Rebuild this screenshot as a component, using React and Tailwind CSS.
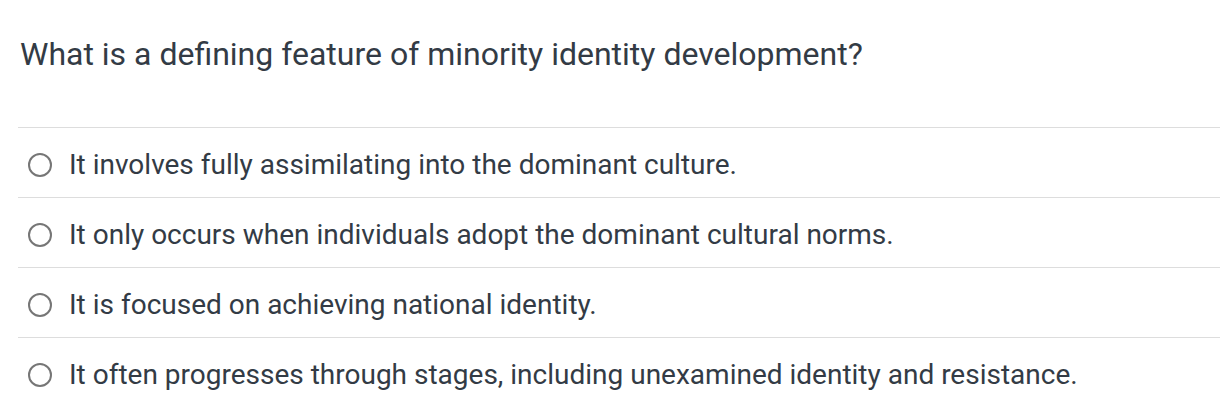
import React from "react";

const options = [
  "It involves fully assimilating into the dominant culture.",
  "It only occurs when individuals adopt the dominant cultural norms.",
  "It is focused on achieving national identity.",
  "It often progresses through stages, including unexamined identity and resistance.",
];

export default function App() {
  return (
    <div className="w-[1220px] h-[406px] bg-white text-[#333b45] pl-[18px]" style={{ fontFamily: "Roboto, sans-serif" }}>
      <div className="h-[127px] flex items-start pt-[34px] pl-[2px]">
        <h1 className="text-[32px] leading-[40px] font-normal">What is a defining feature of minority identity development?</h1>
      </div>
      {options.map((opt, i) => (
        <label key={i} className="h-[70px] border-t border-[#dddddd] flex items-center gap-[17px] pl-[10px] pt-[4px]">
          <span className="w-[24px] h-[24px] rounded-full border-2 border-[#767676] shrink-0" />
          <span className="text-[28px] leading-[32px]">{opt}</span>
        </label>
      ))}
    </div>
  );
}
